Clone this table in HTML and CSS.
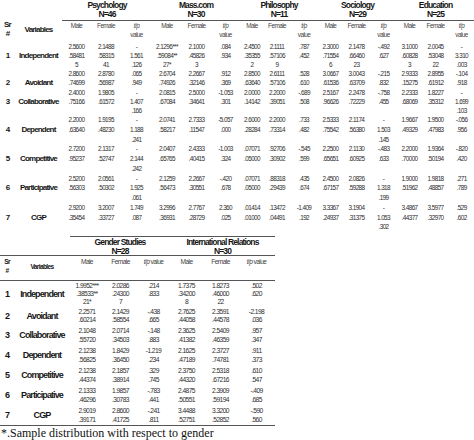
FILE: index.html
```html
<!DOCTYPE html>
<html>
<head>
<meta charset="utf-8">
<title>Sample distribution</title>
<link rel="stylesheet" href="styles.css">
</head>
<body>
<table class="tbl upper">
  <colgroup>
    <col class="w15"><col class="w47">
    <col class="w29"><col class="w30"><col class="w31">
    <col class="w30"><col class="w29"><col class="w29">
    <col class="w24"><col class="w26"><col class="w28">
    <col class="w25"><col class="w27"><col class="w27">
    <col class="w25"><col class="w27"><col class="w25">
  </colgroup>
  <thead>
    <tr class="grp">
      <th colspan="2" class="blank"></th>
      <th colspan="3" class="gh">Psychology<br>N=46</th>
      <th colspan="3" class="gh">Mass.com<br>N=30</th>
      <th colspan="3" class="gh">Philosophy<br>N=11</th>
      <th colspan="3" class="gh">Sociology<br>N=29</th>
      <th colspan="3" class="gh">Education<br>N=25</th>
    </tr>
    <tr class="sub">
      <th class="lab">Sr<br>#</th><th class="lab mid">Variables</th>
      <th>Male</th><th>Female</th><th><i>t/p</i><br>value</th>
      <th>Male</th><th>Female</th><th><i>t/p</i><br>value</th>
      <th>Male</th><th>Female</th><th><i>t/p</i><br>value</th>
      <th>Male</th><th>Female</th><th><i>t/p</i><br>value</th>
      <th>Male</th><th>Female</th><th><i>t/p</i><br>value</th>
    </tr>
  </thead>
  <tbody>
    <tr class="ra">
      <td class="lab">1</td><td class="lab">Independent</td>
      <td>2.5600<br>.58481<br>5</td><td>2.1488<br>.58315<br>41</td><td>-<br>1.561<br>.126</td>
      <td>2.1296***<br>.59084**<br>27*</td><td>2.1000<br>.45826<br>3</td><td>.084<br>.934</td>
      <td>2.4500<br>.35355<br>2</td><td>2.1111<br>.57106<br>9</td><td>.787<br>.452</td>
      <td>2.3000<br>.71554<br>6</td><td>2.1478<br>.66460<br>23</td><td>-.492<br>.627</td>
      <td>3.1000<br>.60828<br>3</td><td>2.0045<br>.53048<br>22</td><td>-<br>3.310<br>.003</td>
    </tr>
    <tr class="ra">
      <td class="lab">2</td><td class="lab">Avoidant</td>
      <td>2.8600<br>.74699</td><td>2.8780<br>.56987</td><td>.065<br>.949</td>
      <td>2.6704<br>.74926</td><td>2.2667<br>.32146</td><td>.912<br>.369</td>
      <td>2.8500<br>.63640</td><td>2.6111<br>.57106</td><td>.528<br>.610</td>
      <td>3.0667<br>.61536</td><td>3.0043<br>.63709</td><td>-.215<br>.832</td>
      <td>2.9333<br>.15275</td><td>2.8955<br>.61912</td><td>-.104<br>.918</td>
    </tr>
    <tr class="ra">
      <td class="lab">3</td><td class="lab">Collaborative</td>
      <td>2.4000<br>.75166</td><td>1.9805<br>.61572</td><td>-<br>1.407<br>.166</td>
      <td>2.0815<br>.67084</td><td>2.5000<br>.34641</td><td>-1.053<br>.301</td>
      <td>2.0000<br>.14142</td><td>2.2000<br>.39051</td><td>-.689<br>.508</td>
      <td>2.5167<br>.96626</td><td>2.2478<br>.72229</td><td>-.758<br>.455</td>
      <td>2.2333<br>.68069</td><td>1.8227<br>.35312</td><td>-<br>1.699<br>.103</td>
    </tr>
    <tr class="rb">
      <td class="lab">4</td><td class="lab">Dependent</td>
      <td>2.2000<br>.63640</td><td>1.9195<br>.48230</td><td>-<br>1.188<br>.241</td>
      <td>2.0741<br>.58217</td><td>2.7333<br>.11547</td><td>-5.057<br>.000</td>
      <td>2.6000<br>.28284</td><td>2.2000<br>.73314</td><td>.733<br>.482</td>
      <td>2.5333<br>.75542</td><td>2.1174<br>.56380</td><td>-<br>1.503<br>.145</td>
      <td>1.9667<br>.49329</td><td>1.9500<br>.47983</td><td>-.056<br>.956</td>
    </tr>
    <tr class="rb">
      <td class="lab">5</td><td class="lab">Competitive</td>
      <td>2.7200<br>.95237</td><td>2.1317<br>.52747</td><td>-<br>2.144<br>.242</td>
      <td>2.0407<br>.65765</td><td>2.4333<br>.40415</td><td>-1.003<br>.324</td>
      <td>.07071<br>.05000</td><td>.92706<br>.30902</td><td>-.545<br>.599</td>
      <td>2.2500<br>.65651</td><td>2.1130<br>.60925</td><td>-.483<br>.633</td>
      <td>2.2000<br>.70000</td><td>1.9364<br>.50194</td><td>-.820<br>.420</td>
    </tr>
    <tr class="rb">
      <td class="lab">6</td><td class="lab">Participative</td>
      <td>2.5200<br>.56303</td><td>2.0561<br>.50302</td><td>-<br>1.925<br>.061</td>
      <td>2.1259<br>.56473</td><td>2.2667<br>.30551</td><td>-.420<br>.678</td>
      <td>.07071<br>.05000</td><td>.88318<br>.29439</td><td>.435<br>.674</td>
      <td>2.4500<br>.67157</td><td>2.0826<br>.59288</td><td>-<br>1.318<br>.199</td>
      <td>1.9000<br>.51962</td><td>1.9818<br>.48857</td><td>.271<br>.789</td>
    </tr>
    <tr class="rb">
      <td class="lab">7</td><td class="lab">CGP</td>
      <td>2.9200<br>.35454</td><td>3.2007<br>.33727</td><td>1.749<br>.087</td>
      <td>3.2996<br>.36931</td><td>2.7767<br>.28729</td><td>2.360<br>.025</td>
      <td>.01414<br>.01000</td><td>.13472<br>.04491</td><td>-1.409<br>.192</td>
      <td>3.3367<br>.24937</td><td>3.1904<br>.31375</td><td>-<br>1.053<br>.302</td>
      <td>3.4867<br>.44377</td><td>3.5977<br>.32970</td><td>.529<br>.602</td>
    </tr>
  </tbody>
</table>

<table class="tbl lower">
  <colgroup>
    <col class="w14"><col class="w56">
    <col class="w34"><col class="w33"><col class="w33">
    <col class="w33"><col class="w35"><col class="w37">
  </colgroup>
  <thead>
    <tr class="grp">
      <th colspan="2" class="blank"></th>
      <th colspan="3" class="gh">Gender Studies<br>N=28</th>
      <th colspan="3" class="gh">International Relations<br>N=30</th>
    </tr>
    <tr class="sub">
      <th class="lab">Sr<br>#</th><th class="lab mid">Variables</th>
      <th>Male</th><th>Female</th><th><i>t/p</i> value</th>
      <th>Male</th><th>Female</th><th><i>t/p</i> value</th>
    </tr>
  </thead>
  <tbody>
    <tr class="ra">
      <td class="lab">1</td><td class="lab">Independent</td>
      <td>1.9952***<br>.38533**<br>21*</td><td>2.0286<br>.24300<br>7</td><td>.214<br>.833</td>
      <td>1.7375<br>.34200<br>8</td><td>1.8273<br>.46000<br>22</td><td>.502<br>.620</td>
    </tr>
    <tr class="ra">
      <td class="lab">2</td><td class="lab">Avoidant</td>
      <td>2.2571<br>.60214</td><td>2.1429<br>.58554</td><td>-.438<br>.665</td>
      <td>2.7625<br>.44058</td><td>2.3591<br>.44578</td><td>-2.198<br>.036</td>
    </tr>
    <tr class="rb">
      <td class="lab">3</td><td class="lab">Collaborative</td>
      <td>2.1048<br>.55720</td><td>2.0714<br>.34503</td><td>-.148<br>.883</td>
      <td>2.3625<br>.41382</td><td>2.5409<br>.46359</td><td>.957<br>.347</td>
    </tr>
    <tr class="rb">
      <td class="lab">4</td><td class="lab">Dependent</td>
      <td>2.1238<br>.56825</td><td>1.8429<br>.36450</td><td>-1.219<br>.234</td>
      <td>2.1625<br>.47189</td><td>2.3727<br>.74781</td><td>.911<br>.373</td>
    </tr>
    <tr class="rb">
      <td class="lab">5</td><td class="lab">Competitive</td>
      <td>2.1238<br>.44374</td><td>2.1857<br>.38914</td><td>.329<br>.745</td>
      <td>2.3750<br>.44320</td><td>2.5318<br>.67216</td><td>.610<br>.547</td>
    </tr>
    <tr class="rb">
      <td class="lab">6</td><td class="lab">Participative</td>
      <td>2.1333<br>.46296</td><td>1.9857<br>.30783</td><td>-.783<br>.441</td>
      <td>2.4875<br>.50551</td><td>2.3909<br>.59194</td><td>-.409<br>.685</td>
    </tr>
    <tr class="rb last">
      <td class="lab">7</td><td class="lab">CGP</td>
      <td>2.9019<br>.39171</td><td>2.8600<br>.41725</td><td>-.241<br>.811</td>
      <td>3.4488<br>.52751</td><td>3.3200<br>.52852</td><td>-.590<br>.560</td>
    </tr>
  </tbody>
</table>

<p class="note">*.Sample distribution with respect to gender</p>
</body>
</html>
```

FILE: styles.css
```css
html, body {
  margin: 0;
  padding: 0;
  background: #ffffff;
}

body {
  width: 474px;
  height: 440px;
  overflow: hidden;
  font-family: "Liberation Sans", Arial, sans-serif;
  color: #2e2e2e;
}

.tbl {
  border-collapse: collapse;
  border-spacing: 0;
  table-layout: fixed;
}

.tbl th,
.tbl td {
  padding: 0;
  text-align: center;
  vertical-align: top;
  white-space: nowrap;
  font-weight: normal;
  overflow: visible;
  font-size: 6.4px;
  letter-spacing: -0.09em;
}

.tbl i {
  font-style: italic;
}

/* column widths */
.w14 { width: 14px; }
.w15 { width: 15px; }
.w24 { width: 24px; }
.w25 { width: 25px; }
.w26 { width: 26px; }
.w27 { width: 27px; }
.w28 { width: 28px; }
.w29 { width: 29px; }
.w30 { width: 30px; }
.w31 { width: 31px; }
.w33 { width: 33px; }
.w34 { width: 34px; }
.w35 { width: 35px; }
.w37 { width: 37px; }
.w47 { width: 47px; }
.w56 { width: 56px; }

.upper {
  width: 474px;
}

.lower {
  width: 275px;
  margin-top: 4px;
}

/* group headers */
.tbl .gh {
  font-weight: bold;
  font-size: 8.5px;
  line-height: 9px;
  letter-spacing: -0.1em;
  color: #161616;
}

.upper .grp th {
  padding-top: 0.5px;
  padding-bottom: 1px;
}

.upper .gh {
  border-bottom: 1px solid #555555;
}

.lower .gh {
  border-top: 1px solid #555555;
  line-height: 8.5px;
}

.lower .grp th {
  padding-top: 1px;
  border-bottom: 1px solid #555555;
}

/* sub header row */
.tbl .sub th {
  line-height: 9px;
  color: #444444;
}

.upper .sub th {
  padding-bottom: 3px;
}

.lower .sub th {
  padding-top: 1px;
  padding-bottom: 5px;
  border-bottom: 1px solid #555555;
  font-size: 6.6px;
}

.tbl .lab {
  font-weight: bold;
  font-size: 8px;
  letter-spacing: -0.1em;
  color: #161616;
}

.tbl .sub .lab {
  color: #161616;
}

.tbl .mid {
  vertical-align: middle;
}

/* data rows, upper table: label sits on the second line */
.upper .ra td {
  line-height: 9.2px;
}

.upper .ra .lab {
  padding-top: 9.2px;
}

.upper .rb td {
  line-height: 9.75px;
}

.upper .rb .lab {
  padding-top: 9.75px;
}

/* data rows, lower table: labels centred */
.lower td {
  font-size: 6.7px;
}

.lower .ra td {
  line-height: 8.4px;
  padding-top: 0.5px;
  padding-bottom: 0.5px;
}

.lower .rb td {
  line-height: 9px;
  padding-top: 1px;
  padding-bottom: 1px;
}

.lower .lab {
  vertical-align: middle;
  font-size: 9px;
}

.lower .last td {
  border-bottom: 1px solid #555555;
}

.note {
  margin: 1px 0 0 0;
  padding-left: 1px;
  font-family: "Liberation Serif", "Times New Roman", serif;
  font-size: 12px;
  line-height: 12px;
  color: #111111;
}
```
